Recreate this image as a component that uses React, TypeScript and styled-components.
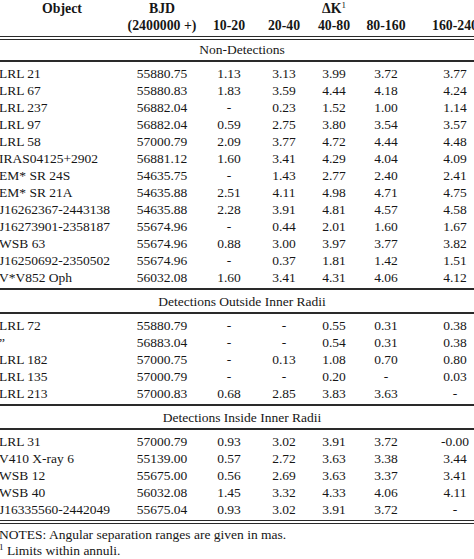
import styled, { createGlobalStyle } from 'styled-components';

const GlobalStyle = createGlobalStyle`
  html, body {
    margin: 0;
    padding: 0;
    background: #fff;
    overflow: hidden;
  }
  body {
    font-family: "Liberation Serif", "Times New Roman", serif;
    color: #161616;
  }
`;

const COLS = '126px 74px 60px 50px 50px 54px 84px';

const Sheet = styled.div`
  width: 498px;
  margin-left: -1px;
  font-size: 13.5px;
`;

const HeadRow = styled.div`
  display: grid;
  grid-template-columns: ${COLS};
  height: 17px;
  line-height: 17px;
  font-weight: bold;
  font-size: 13.8px;
`;

const Row = styled.div`
  display: grid;
  grid-template-columns: ${COLS};
  height: 17px;
  line-height: 17px;
`;

const Cell = styled.div<{ $left?: boolean }>`
  text-align: ${(p) => (p.$left ? 'left' : 'center')};
  white-space: nowrap;
`;

const Sup = styled.sup`
  font-size: 9px;
  font-weight: normal;
  line-height: 0;
  vertical-align: 5px;
`;

const Rule = styled.div<{ $double?: boolean }>`
  margin: ${(p) => (p.$double ? '2px 0 0.5px' : '2.5px 0')};
  height: ${(p) => (p.$double ? '2px' : '0')};
  border-top: ${(p) => (p.$double ? '1.5px' : '2px')} solid #2a2a2a;
  border-bottom: ${(p) => (p.$double ? '1.5px solid #2a2a2a' : 'none')};
`;

const SectionTitle = styled.div`
  width: 486px;
  text-align: center;
  height: 17px;
  line-height: 17px;
`;

const Notes = styled.div`
  margin-top: 3px;
  line-height: 16.5px;
`;

type Line = [string, string, string, string, string, string, string];

const sections: { title: string; rows: Line[] }[] = [
  {
    title: 'Non-Detections',
    rows: [
      ['LRL 21', '55880.75', '1.13', '3.13', '3.99', '3.72', '3.77'],
      ['LRL 67', '55880.83', '1.83', '3.59', '4.44', '4.18', '4.24'],
      ['LRL 237', '56882.04', '-', '0.23', '1.52', '1.00', '1.14'],
      ['LRL 97', '56882.04', '0.59', '2.75', '3.80', '3.54', '3.57'],
      ['LRL 58', '57000.79', '2.09', '3.77', '4.72', '4.44', '4.48'],
      ['IRAS04125+2902', '56881.12', '1.60', '3.41', '4.29', '4.04', '4.09'],
      ['EM* SR 24S', '54635.75', '-', '1.43', '2.77', '2.40', '2.41'],
      ['EM* SR 21A', '54635.88', '2.51', '4.11', '4.98', '4.71', '4.75'],
      ['J16262367-2443138', '54635.88', '2.28', '3.91', '4.81', '4.57', '4.58'],
      ['J16273901-2358187', '55674.96', '-', '0.44', '2.01', '1.60', '1.67'],
      ['WSB 63', '55674.96', '0.88', '3.00', '3.97', '3.77', '3.82'],
      ['J16250692-2350502', '55674.96', '-', '0.37', '1.81', '1.42', '1.51'],
      ['V*V852 Oph', '56032.08', '1.60', '3.41', '4.31', '4.06', '4.12'],
    ],
  },
  {
    title: 'Detections Outside Inner Radii',
    rows: [
      ['LRL 72', '55880.79', '-', '-', '0.55', '0.31', '0.38'],
      ['\u201D', '56883.04', '-', '-', '0.54', '0.31', '0.38'],
      ['LRL 182', '57000.75', '-', '0.13', '1.08', '0.70', '0.80'],
      ['LRL 135', '57000.79', '-', '-', '0.20', '-', '0.03'],
      ['LRL 213', '57000.83', '0.68', '2.85', '3.83', '3.63', '-'],
    ],
  },
  {
    title: 'Detections Inside Inner Radii',
    rows: [
      ['LRL 31', '57000.79', '0.93', '3.02', '3.91', '3.72', '-0.00'],
      ['V410 X-ray 6', '55139.00', '0.57', '2.72', '3.63', '3.38', '3.44'],
      ['WSB 12', '55675.00', '0.56', '2.69', '3.63', '3.37', '3.41'],
      ['WSB 40', '56032.08', '1.45', '3.32', '4.33', '4.06', '4.11'],
      ['J16335560-2442049', '55675.04', '0.93', '3.02', '3.91', '3.72', '-'],
    ],
  },
];

export default function App() {
  return (
    <>
      <GlobalStyle />
      <Sheet>
        <HeadRow>
          <Cell>Object</Cell>
          <Cell>BJD</Cell>
          <Cell />
          <Cell />
          <Cell>
            ΔK<Sup>1</Sup>
          </Cell>
          <Cell />
          <Cell />
        </HeadRow>
        <HeadRow>
          <Cell />
          <Cell>(2400000 +)</Cell>
          <Cell>10-20</Cell>
          <Cell>20-40</Cell>
          <Cell>40-80</Cell>
          <Cell>80-160</Cell>
          <Cell>160-240</Cell>
        </HeadRow>

        {sections.map((s, i) => (
          <div key={s.title}>
            <Rule $double={i === 0} />
            <SectionTitle>{s.title}</SectionTitle>
            <Rule />
            {s.rows.map((r, j) => (
              <Row key={j}>
                {r.map((v, k) => (
                  <Cell key={k} $left={k === 0}>
                    {v}
                  </Cell>
                ))}
              </Row>
            ))}
          </div>
        ))}
        <Rule $double />
        <Notes>
          NOTES: Angular separation ranges are given in mas.
          <br />
          <Sup>1</Sup> Limits within annuli.
        </Notes>
      </Sheet>
    </>
  );
}
